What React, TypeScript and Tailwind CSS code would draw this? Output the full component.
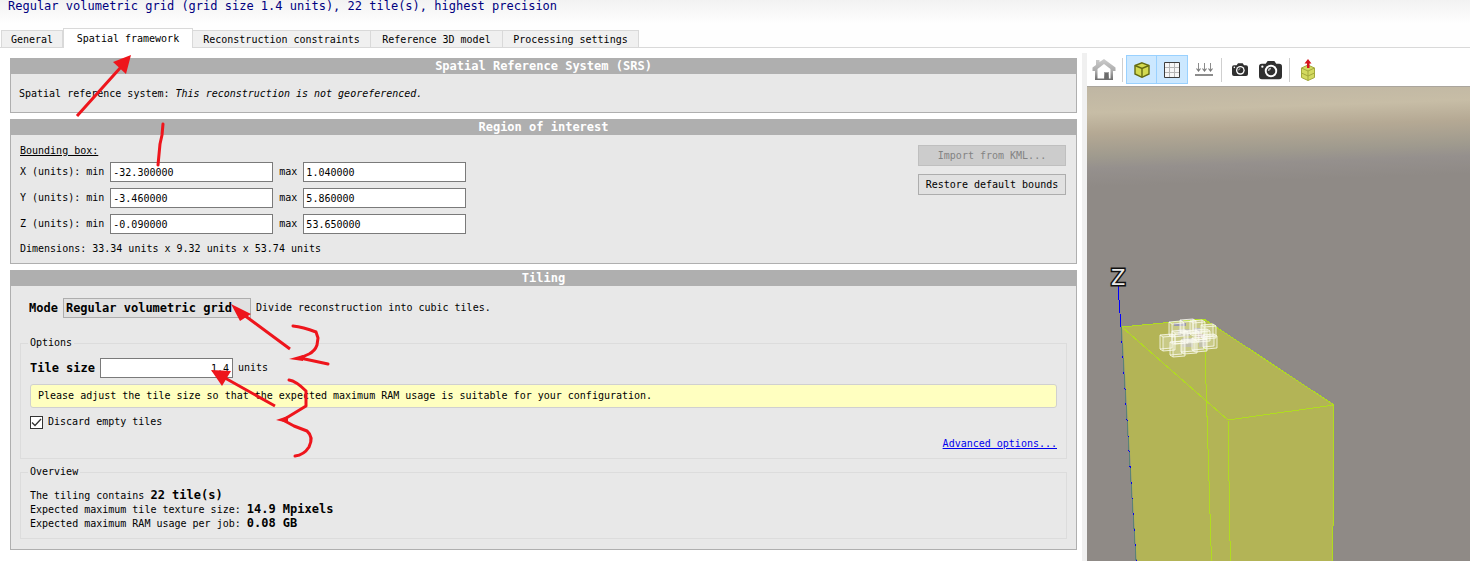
import React from "react";

const tabs = [
  "General",
  "Spatial framework",
  "Reconstruction constraints",
  "Reference 3D model",
  "Processing settings",
];

const tabWidths = ["w-[62px]", "w-[130px]", "w-[178px]", "w-[132px]", "w-[136px]"];

const bounds = [
  { axis: "X", min: "-32.300000", max: "1.040000" },
  { axis: "Y", min: "-3.460000", max: "5.860000" },
  { axis: "Z", min: "-0.090000", max: "53.650000" },
];

const Section: React.FC<{ title: string; children: React.ReactNode }> = ({ title, children }) => (
  <section className="border border-[#afafaf] bg-[#e8e8e8]">
    <h2 className="h-[15px] bg-[#afafaf] text-center text-[12px] leading-[14px] font-bold text-white">
      {title}
    </h2>
    {children}
  </section>
);

const BoundInput: React.FC<{ label: string; name: string; value: string }> = ({
  label,
  name,
  value,
}) => (
  <>
    <label htmlFor={name}>{label}</label>
    <input
      id={name}
      defaultValue={value}
      className="h-5 w-[163px] border border-[#7a7a7a] bg-white px-[2px] outline-none"
    />
  </>
);

const HomeIcon = () => (
  <svg width="24" height="24" viewBox="0 0 24 24" aria-hidden="true">
    <defs>
      <linearGradient id="home" x1="0" y1="0" x2="0" y2="1">
        <stop offset="0" stopColor="#cdcdcd" />
        <stop offset="0.6" stopColor="#aaa" />
        <stop offset="1" stopColor="#6c6c6c" />
      </linearGradient>
    </defs>
    <path
      fill="url(#home)"
      fillRule="evenodd"
      d="M12 1 7.500 4V2H4v5L.5 9.500V13H3v9h18v-9h2.500V9.500ZM12 6l6.500 5v9.500H17V14h-5v6.500H5.500V11Z"
    />
    <path fill="#6c6c6c" d="M13 15h3v6h-3z" />
  </svg>
);

const CubeIcon = () => (
  <svg width="16" height="16" viewBox="0 0 16 16" aria-hidden="true">
    <path
      d="M8 .8 15 3.500v8.500L8 15.300 1 12V3.500Z"
      fill="#d3da50"
      stroke="#646b12"
      strokeWidth="1.400"
    />
    <path d="m1 3.500 7 3 7-3M8 6.500v8.500" fill="none" stroke="#646b12" strokeWidth="1.400" />
  </svg>
);

const GridIcon = () => (
  <svg width="16" height="16" viewBox="0 0 16 16" aria-hidden="true">
    <path d="M.5.5h15v15H.5z" fill="#f6f6f6" />
    <path d="M5.500 1v14M10.500 1v14M1 5.500h14M1 10.500h14" stroke="#b5b5b5" />
    <path d="M.5.5h15v15H.5z" fill="none" stroke="#3c3c3c" />
  </svg>
);

const GroundIcon = () => (
  <svg width="18" height="14" viewBox="0 0 18 14" aria-hidden="true">
    <path d="M3.500 0v8M9.500 0v8M15.500 0v8" stroke="#8c8c8c" />
    <path
      d="m1.500 5.500 2 2.500 2-2.500m2 0 2 2.500 2-2.500m2 0 2 2.500 2-2.500"
      fill="none"
      stroke="#777"
      strokeWidth="1.200"
    />
    <path d="M0 11h18v2H0z" fill="#8c8c8c" />
  </svg>
);

const CameraIcon: React.FC<{ size: number }> = ({ size }) => (
  <svg width={size} height={size} viewBox="0 0 24 24" aria-hidden="true">
    <path
      fill="#303030"
      d="M3 5h4l2-3h7l2 3h3q3 0 3 3v10q0 3-3 3H3q-3 0-3-3V8q0-3 3-3Z"
    />
    <circle cx="12.500" cy="12.500" r="6.500" fill="#fff" />
    <circle cx="12.500" cy="12.500" r="4.500" fill="#303030" />
    <path d="M10 12.500a2.500 2.500 0 0 1 2.500-2.500" fill="none" stroke="#bbb" strokeWidth="1.500" />
    <circle cx="3.500" cy="8" r="1.200" fill="#fff" />
  </svg>
);

const ExportIcon = () => (
  <svg width="16" height="22" viewBox="0 0 16 22" aria-hidden="true">
    <path d="m8 6 6.500 3v9.500L8 21.500l-6.500-3V9Z" fill="#d3da60" stroke="#a3a83c" />
    <path d="m1.500 9 6.500 3 6.500-3M8 12v9.500M1.500 14 8 17l6.500-3" fill="none" stroke="#a3a83c" />
    <path d="M8 0 4.500 4.500H7V9h2.500V4.500h2Z" fill="#d4141c" />
  </svg>
);

const ToolButton: React.FC<{ label: string; className: string; children: React.ReactNode }> = ({
  label,
  className,
  children,
}) => (
  <button
    type="button"
    aria-label={label}
    className={`flex h-[29px] shrink-0 items-center justify-center pt-px ${className}`}
  >
    {children}
  </button>
);

const Divider = () => <span className="h-6 w-px shrink-0 bg-[#cfcfcf]" />;

// Tiles clustered at the top of the region: x, y, width, height
const tiles = [
  [1160, 335, 12, 14],
  [1169, 322, 12, 13],
  [1172, 331, 13, 11],
  [1180, 320, 13, 12],
  [1190, 321, 12, 13],
  [1201, 325, 12, 12],
  [1170, 342, 12, 13],
  [1181, 340, 13, 12],
  [1192, 338, 12, 12],
  [1203, 335, 11, 12],
  [1184, 331, 12, 10],
  [1195, 330, 12, 10],
];

const Scene = () => (
  <svg
    className="block h-full w-full"
    viewBox="1087 87 383 474"
    preserveAspectRatio="xMinYMin slice"
    role="img"
    aria-label="3D view"
  >
    <path d="M1122 327 1204 319 1334 405 1330 900H1158Z" fill="#b3b456" />
    <g fill="none" stroke="#b0dc20" shapeRendering="crispEdges">
      <path d="M1122 327 1204 319 1334 405 1228 420Z" />
      <path d="M1228 420 1236 900M1334 405 1330 900M1204 319 1222 900" />
    </g>
    <path d="M1121 327 1158 900" stroke="#5b8277" shapeRendering="crispEdges" />
    <path
      d="M1121 327 1158 900"
      stroke="#0000ee"
      strokeDasharray="2 13.700"
      strokeDashoffset="2"
      shapeRendering="crispEdges"
    />
    <path d="M1118 286 1121 327" stroke="#0000ff" shapeRendering="crispEdges" />
    <g fill="#a9a68c">
      <path d="M1178 329h12v7h-12zM1182 338h11v9h-11zM1199 340h7v7h-7z" />
      <path d="M1174 323h12v3h-12z" fill="#6e6a90" />
      <path d="M1194 328h6v5h-6z" fill="#aaa9aa" />
      <path d="M1197 334h8v4h-8z" fill="#a07a6c" />
    </g>
    <g fill="#ffffff" fillOpacity="0.16" stroke="#fbfbf0" strokeOpacity="0.8">
      {tiles.map(([x, y, w, h]) => (
        <g key={`${x}-${y}`}>
          <path d={`M${x} ${y}l${w}-1v${h}l-${w} 1z`} />
          <path
            d={`M${x} ${y}l3 2l${w}-1l-3-2M${x + 3} ${y + 2}v${h}l${w}-1v-${h}M${x} ${y + h}l3 2`}
          />
        </g>
      ))}
    </g>
    <text
      x="1111"
      y="285"
      fill="#e8e8e8"
      stroke="#111"
      strokeWidth="3"
      paintOrder="stroke"
      className="font-['DejaVu_Sans'] text-[21px]"
    >
      Z
    </text>
  </svg>
);

const Annotations = () => (
  <svg
    className="pointer-events-none absolute top-0 left-0"
    width="400"
    height="480"
    viewBox="0 0 400 480"
    fill="none"
    stroke="#ee151c"
    strokeWidth="3"
    strokeLinecap="round"
    strokeLinejoin="round"
    aria-hidden="true"
  >
    <path d="M77 116 121 67M290 349 244 315M275 406 225 378" strokeLinecap="butt" />
    <path
      d="M131 55 113 62 126 74ZM231 304 251 314 240 321ZM211 370 231 371 222 386Z"
      fill="#ee151c"
      stroke="none"
    />
    <path d="M163 124 162 135 160 144 158 165" />
    <path d="M293 326Q303 327 316 332L318 338 317 345Q315 351 309 354L300 358 328 364" />
    <path d="M289 380Q296 381 306 391V406L283 420 294 426 307 431Q314 437 309 447 304 455 295 456" />
    <path d="M289 359 303 355V361ZM276 420 288 416V423Z" fill="#ee151c" stroke="none" />
  </svg>
);

const App: React.FC = () => {
  return (
    <div className="relative flex min-h-screen flex-col bg-white font-['DejaVu_Sans_Mono','Liberation_Mono',monospace] text-[10px] leading-[14px] text-black">
      <header className="bg-linear-to-b from-[#f2f2f2] to-[#fefefe] to-50%">
        <p className="h-7 pl-2 text-[12px] leading-[13px] text-[#000080]">
          Regular volumetric grid (grid size 1.4 units), 22 tile(s), highest precision
        </p>
        <div role="tablist" className="flex items-end border-b border-[#d9d9d9] pl-px">
          {tabs.map((tab, i) => (
            <button
              key={tab}
              type="button"
              role="tab"
              aria-selected={i === 1}
              className={`shrink-0 border-[#d9d9d9] text-center whitespace-nowrap ${tabWidths[i]} ${
                i === 1
                  ? "-mb-px h-5 border-x border-t bg-white"
                  : "h-[17px] border-t border-r bg-[#f0f0f0] pt-px first:border-l"
              }`}
            >
              {tab}
            </button>
          ))}
        </div>
      </header>

      <div className="flex flex-1">
        <main className="flex min-w-0 flex-1 flex-col gap-[6px] pt-[10px] pr-[5px] pl-[10px]">
          <Section title="Spatial Reference System (SRS)">
            <p className="px-2 pt-[13px] pb-[11px]">
              Spatial reference system: <em>This reconstruction is not georeferenced.</em>
            </p>
          </Section>

          <Section title="Region of interest">
            <div className="flex items-start justify-between pt-[9px] pr-[10px] pb-[7px] pl-[9px]">
              <div>
                <h3 className="mb-1 underline">Bounding box:</h3>
                <div className="flex flex-col gap-[6px]">
                  {bounds.map(({ axis, min, max }) => (
                    <div key={axis} className="flex items-center gap-[6px]">
                      <BoundInput label={`${axis} (units): min`} name={`${axis}-min`} value={min} />
                      <BoundInput label="max" name={`${axis}-max`} value={max} />
                    </div>
                  ))}
                </div>
                <p className="mt-2">Dimensions: 33.34 units x 9.32 units x 53.74 units</p>
              </div>
              <div className="mt-px flex w-[148px] flex-col gap-2">
                <button
                  type="button"
                  disabled
                  className="h-[21px] border border-[#bfbfbf] bg-[#cccccc] text-[#838383]"
                >
                  Import from KML...
                </button>
                <button type="button" className="h-[21px] border border-[#adadad] bg-[#e1e1e1]">
                  Restore default bounds
                </button>
              </div>
            </div>
          </Section>

          <Section title="Tiling">
            <div className="px-[9px] pt-3 pb-[10px]">
              <div className="flex items-center gap-[5px] pl-[9px]">
                <label htmlFor="mode" className="text-[12px] font-bold">
                  Mode
                </label>
                <select
                  id="mode"
                  className="h-5 w-[188px] appearance-none border border-[#adadad] bg-[#e1e1e1] px-[2px] text-[12px] font-bold"
                >
                  <option>Regular volumetric grid</option>
                </select>
                <span>Divide reconstruction into cubic tiles.</span>
              </div>

              <fieldset className="mt-[18px] border border-[#dcdcdc] px-[9px] pb-[7px]">
                <legend className="-ml-[2px] px-[2px]">Options</legend>
                <div className="mt-[8px] flex items-center gap-[5px]">
                  <label htmlFor="tile-size" className="text-[12px] font-bold">
                    Tile size
                  </label>
                  <input
                    id="tile-size"
                    defaultValue="1.4"
                    className="h-5 w-[133px] border border-[#7a7a7a] bg-white px-[3px] text-right outline-none"
                  />
                  <span>units</span>
                </div>
                <p className="mt-[6px] rounded-[3px] border border-[#d0d0d0] bg-[#ffffc0] px-[7px] py-1">
                  Please adjust the tile size so that the expected maximum RAM usage is suitable for
                  your configuration.
                </p>
                <label className="mt-[7px] flex items-center gap-[5px]">
                  <span className="relative flex">
                    <input
                      type="checkbox"
                      defaultChecked
                      className="peer size-[13px] appearance-none border border-[#333] bg-white"
                    />
                    <svg
                      className="pointer-events-none absolute inset-0 hidden peer-checked:block"
                      viewBox="0 0 13 13"
                      fill="none"
                      stroke="#333"
                      strokeWidth="1.300"
                      aria-hidden="true"
                    >
                      <path d="m2 6.500 3 3 6-6.500" />
                    </svg>
                  </span>
                  Discard empty tiles
                </label>
                <div className="mt-2 text-right">
                  <a href="#advanced" className="text-[#0000ee] underline">
                    Advanced options...
                  </a>
                </div>
              </fieldset>

              <fieldset className="mt-[6px] border border-[#dcdcdc] px-[9px] pb-[7px]">
                <legend className="-ml-[2px] px-[2px]">Overview</legend>
                <div className="mt-[10px]">
                  <p>
                    The tiling contains <b className="text-[12px] leading-[12px]">22 tile(s)</b>
                  </p>
                  <p>
                    Expected maximum tile texture size:{" "}
                    <b className="text-[12px] leading-[12px]">14.9 Mpixels</b>
                  </p>
                  <p>
                    Expected maximum RAM usage per job:{" "}
                    <b className="text-[12px] leading-[12px]">0.08 GB</b>
                  </p>
                </div>
              </fieldset>
            </div>
          </Section>
        </main>

        <aside className="mt-[5px] flex w-[388px] shrink-0 flex-col border-l-[5px] border-[#f0f0f0]">
          <div className="flex h-[33px] items-center pl-[5px]">
            <ToolButton label="Home" className="w-6">
              <HomeIcon />
            </ToolButton>
            <span className="w-[6px]" />
            <Divider />
            <span className="w-[3px]" />
            <ToolButton label="Tiles" className="w-[31px] border border-[#99d1ff] bg-[#cce8ff]">
              <CubeIcon />
            </ToolButton>
            <ToolButton label="Grid" className="w-[31px] border border-l-0 border-[#99d1ff] bg-[#cce8ff]">
              <GridIcon />
            </ToolButton>
            <ToolButton label="Ground" className="w-[31px]">
              <GroundIcon />
            </ToolButton>
            <span className="w-[2px]" />
            <Divider />
            <ToolButton label="Small cameras" className="ml-[2px] w-[31px]">
              <CameraIcon size={16} />
            </ToolButton>
            <ToolButton label="Large cameras" className="w-[31px]">
              <CameraIcon size={23} />
            </ToolButton>
            <span className="w-[3px]" />
            <Divider />
            <ToolButton label="Export" className="ml-[2px] w-[31px]">
              <ExportIcon />
            </ToolButton>
          </div>
          <div className="min-h-0 flex-1 overflow-hidden border-t border-[#aaa59d] bg-[linear-gradient(178deg,#bfb6a3_0px,#c7bda6_26px,#b5a994_46px,#9f9a8e_70px,#95908d_82px,#8f8a86_100px)]">
            <Scene />
          </div>
        </aside>
      </div>
      <Annotations />
    </div>
  );
};

export default App;
